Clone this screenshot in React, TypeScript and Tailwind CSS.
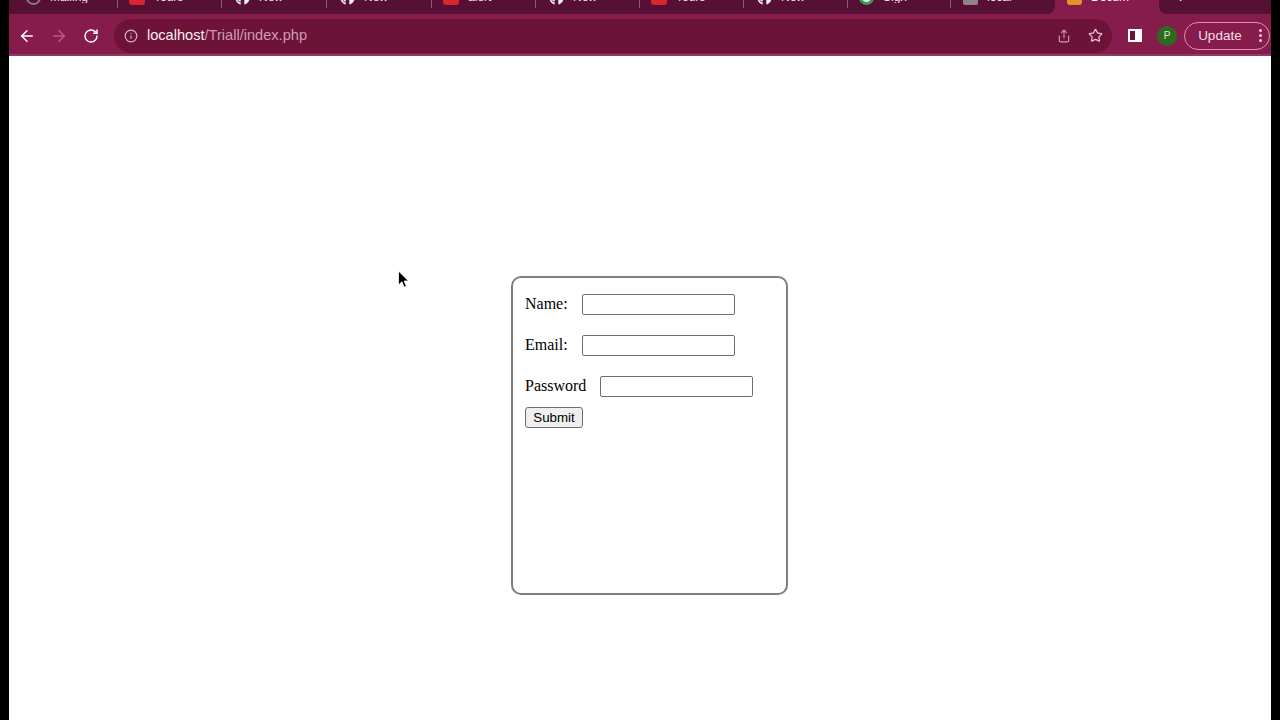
import React from 'react';
import { ArrowLeft, ArrowRight, RotateCw, Info, Share, Star } from 'lucide-react';
import { FaGithub } from 'react-icons/fa';

const tabs = [
  { title: 'Mailing', icon: 'ring', width: 'w-[109px]', pad: 'pl-[17px]' },
  { title: 'Tours', icon: 'red', width: 'w-[104px]', pad: 'pl-[11px]' },
  { title: 'New', icon: 'github', width: 'w-[105px]', pad: 'pl-[13px]' },
  { title: 'New', icon: 'github', width: 'w-[105px]', pad: 'pl-[13px]' },
  { title: 'alert', icon: 'red', width: 'w-[104px]', pad: 'pl-[11px]' },
  { title: 'New', icon: 'github', width: 'w-[104px]', pad: 'pl-[13px]' },
  { title: 'Tours', icon: 'red', width: 'w-[104px]', pad: 'pl-[11px]' },
  { title: 'New', icon: 'github', width: 'w-[104px]', pad: 'pl-[13px]' },
  { title: 'Sign', icon: 'google', width: 'w-[103px]', pad: 'pl-[11px]' },
  { title: 'local', icon: 'gray', width: 'w-[104px]', pad: 'pl-[12px]' },
];

const TabIcon = ({ kind }: { kind: string }) => {
  if (kind === 'red') return <span className="w-[16px] h-[16px] rounded-[3px] bg-[#d9252f] shrink-0" />;
  if (kind === 'github') return <FaGithub size={15} className="text-[#f3eef1] shrink-0" />;
  if (kind === 'google') return <span className="w-[15px] h-[15px] rounded-full bg-[#e9eee9] border-[3px] border-[#3a9a55] shrink-0" />;
  if (kind === 'ring') return <span className="w-[15px] h-[15px] rounded-full border-2 border-[#8b7680] shrink-0" />;
  return <span className="w-[15px] h-[15px] rounded-[2px] bg-[#8e8389] shrink-0" />;
};

export default function App() {
  return (
    <div className="w-[1280px] h-[720px] overflow-hidden bg-black px-[9px] font-['Liberation_Sans',sans-serif]">
      <div className="h-full bg-white flex flex-col">
        {/* tab strip, cut off by the top of the recording */}
        <div className="h-[14px] shrink-0 bg-[#851c4b] flex overflow-hidden">
          <div className="flex bg-[#561033] rounded-br-[8px]">
            {tabs.map((t, i) => (
              <div key={i} className={`${t.width} h-[14px] shrink-0 flex items-start overflow-hidden`}>
                <div className={`flex-1 min-w-0 h-[16px] -mt-[11px] flex items-center gap-[9px] ${t.pad} pr-[13px] text-[12px] leading-[12px] text-[#f3e6ec]`}>
                  <TabIcon kind={t.icon} />
                  <span className="flex-1 truncate">{t.title}</span>
                  <span className="text-[10px]">×</span>
                </div>
                {i < tabs.length - 1 && <span className="w-px h-[8px] bg-[#8a5a72] shrink-0" />}
              </div>
            ))}
          </div>
          <div className="w-[104px] h-[14px] shrink-0 overflow-hidden">
            <div className="h-[16px] -mt-[11px] flex items-center gap-[9px] pl-[12px] pr-[13px] text-[12px] leading-[12px] text-white">
              <span className="w-[15px] h-[15px] rounded-[3px] bg-[#e8912c] shrink-0" />
              <span className="flex-1 truncate">Docum</span>
              <span className="text-[10px]">×</span>
            </div>
          </div>
          <div className="flex-1 bg-[#561033] rounded-bl-[8px] overflow-hidden pl-[17px]">
            <span className="block text-white text-[16px] leading-[16px] -mt-[11px]">+</span>
          </div>
        </div>

        {/* toolbar */}
        <div className="h-[42px] shrink-0 bg-[#851c4b] border-b-2 border-[#8f3a62] pt-[3px] flex items-center pl-[9px] pr-[1px]">
          <ArrowLeft size={18} strokeWidth={2} className="text-white" />
          <ArrowRight size={18} strokeWidth={2} className="text-[#b65c85] ml-[14px]" />
          <RotateCw size={16} strokeWidth={2.2} className="text-white ml-[15px]" />
          <div className="ml-[15px] w-[1000px] h-[34px] rounded-full bg-[#6d1338] flex items-center pl-[10px] pr-[9px] text-[14.6px]">
            <Info size={14} className="text-[#d7b4c5]" />
            <span className="ml-[9px] text-[#fbeef4]">localhost</span>
            <span className="text-[#cf9cb4]">/Triall/index.php</span>
            <Share size={14} className="text-[#d094b0] ml-auto" />
            <Star size={15} className="text-[#e7c3d4] ml-[17px]" />
          </div>
          <span className="ml-[16px] w-[14px] h-[13px] border-2 border-white bg-white flex justify-start">
            <span className="w-[5px] h-full bg-[#6d1338]" />
          </span>
          <span className="ml-[15px] w-[20px] h-[20px] rounded-full bg-[#2c6b1e] text-[#d5e8cf] text-[10px] flex items-center justify-center">P</span>
          <div className="ml-[7px] w-[86px] h-[28px] rounded-full border border-[#e48db5] flex items-center pl-[13px] pr-[7px] text-[13.5px] text-[#f6dbe7]">
            <span className="pt-[1px]">Update</span>
            <span className="ml-auto flex flex-col gap-[2px]">
              <span className="w-[3px] h-[3px] rounded-full bg-[#f0c7da]" />
              <span className="w-[3px] h-[3px] rounded-full bg-[#f0c7da]" />
              <span className="w-[3px] h-[3px] rounded-full bg-[#f0c7da]" />
            </span>
          </div>
        </div>

        {/* page */}
        <div className="relative flex-1 font-['Liberation_Serif',serif] text-[16px] text-black">
          <svg width="12" height="19" viewBox="0 0 12 19" className="absolute left-[388px] top-[214px]">
            <path d="M1.5 1v14l3.4-3.2 2.3 5.4 2.2-1-2.3-5.2h4.4z" fill="#000" stroke="#fff" strokeWidth="0.8" />
          </svg>
          <form className="w-[277px] h-[319px] ml-[502px] mt-[220px] border-2 border-[#7f7f7f] rounded-[10px] pl-[12px] pt-[16px]">
            <div className="h-[41px] flex items-start">
              <label className="w-[57px] leading-[20px]">Name:</label>
              <input type="text" className="w-[152.5px] h-[21px] bg-white border border-[#6e6e6e] rounded-[2px]" />
            </div>
            <div className="h-[41px] flex items-start">
              <label className="w-[57px] leading-[20px]">Email:</label>
              <input type="text" className="w-[152.5px] h-[21px] bg-white border border-[#6e6e6e] rounded-[2px]" />
            </div>
            <div className="h-[31px] flex items-start">
              <label className="w-[75px] leading-[20px]">Password</label>
              <input type="password" className="w-[152.5px] h-[21px] bg-white border border-[#6e6e6e] rounded-[2px]" />
            </div>
            <button type="button" className="block w-[58px] h-[21px] bg-[#efefef] border border-[#6e6e6e] rounded-[3px] font-['Liberation_Sans',sans-serif] text-[13.3px] leading-[18px]">Submit</button>
          </form>
        </div>
      </div>
    </div>
  );
}
